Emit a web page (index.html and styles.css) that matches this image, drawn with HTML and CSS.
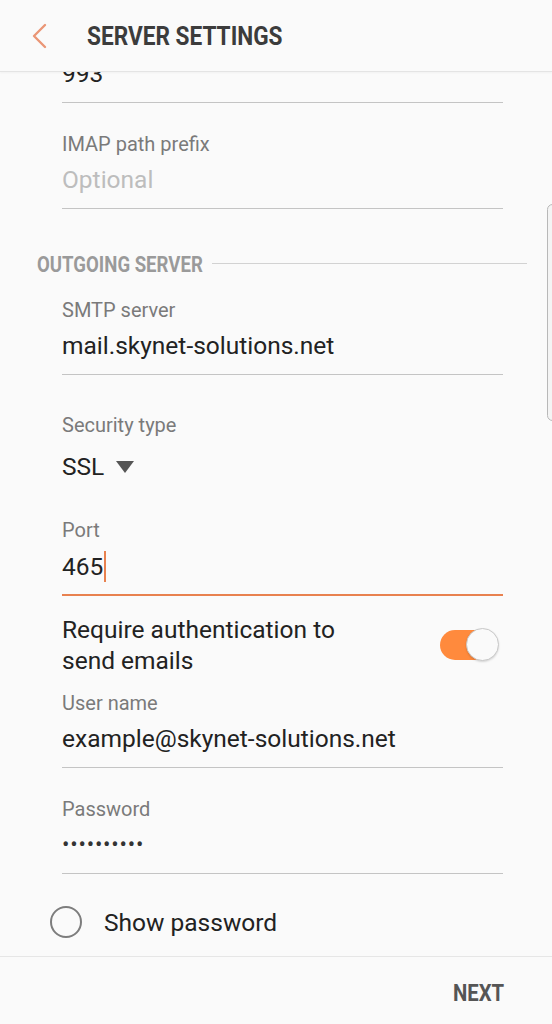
FILE: index.html
```html
<!DOCTYPE html>
<html lang="en">
<head>
  <meta charset="UTF-8">
  <meta name="viewport" content="width=device-width, initial-scale=1.0">
  <title>Server Settings</title>
  <link rel="stylesheet" href="styles.css">
</head>
<body>

<div class="screen">

  <!-- Toolbar -->
  <div class="toolbar">
    <a href="#" class="back" aria-label="Back">
      <svg width="24" height="28" viewBox="0 0 24 28">
        <polyline points="15,3 4,14 15,25" fill="none" stroke="#ea9676" stroke-width="2.4" stroke-linecap="round" stroke-linejoin="round"/>
      </svg>
    </a>
    <h1><span>SERVER SETTINGS</span></h1>
  </div>

  <!-- Settings list -->
  <div class="content">
    <div class="list">
      <div class="field">
        <div class="label">Port</div>
        <div class="value">993</div>
      </div>

      <div class="field">
        <div class="label">IMAP path prefix</div>
        <div class="value hint">Optional</div>
      </div>

      <div class="section-title">
        <span><span class="squeeze">OUTGOING SERVER</span></span>
        <div class="rule"></div>
      </div>

      <div class="field first">
        <div class="label">SMTP server</div>
        <div class="value">mail.skynet-solutions.net</div>
      </div>

      <div class="field spinner">
        <div class="label">Security type</div>
        <div class="value">SSL <span class="caret"></span></div>
      </div>

      <div class="field focused">
        <div class="label">Port</div>
        <div class="value">465<span class="cursor"></span></div>
      </div>

      <div class="switch-row">
        <div class="switch-text">Require authentication to<br>send emails</div>
        <div class="switch on"><div class="thumb"></div></div>
      </div>

      <div class="field tight">
        <div class="label">User name</div>
        <div class="value">example@skynet-solutions.net</div>
      </div>

      <div class="field">
        <div class="label">Password</div>
        <div class="value dots">••••••••••</div>
      </div>

      <div class="check-row">
        <div class="radio"></div>
        <span>Show password</span>
      </div>
    </div>

    <div class="scrollbar"></div>
  </div>

  <!-- Bottom bar -->
  <div class="bottom-bar">
    <a href="#" class="next"><span class="squeeze">NEXT</span></a>
  </div>

</div>

</body>
</html>
```

FILE: styles.css
```css
body {
  margin: 0;
  font-family: Roboto, "Liberation Sans", sans-serif;
  background-color: #fafafa;
  color: #222;
}

.screen {
  height: 1024px;
  display: flex;
  flex-direction: column;
  overflow: hidden;
}

.toolbar {
  height: 71px;
  flex: none;
  display: flex;
  align-items: center;
  border-bottom: 1px solid #e4e4e4;
  box-shadow: 0 1px 2px rgba(0, 0, 0, 0.04);
  background-color: #fafafa;
  position: relative;
  z-index: 2;
}

.toolbar .back {
  display: flex;
  margin-left: 30px;
  width: 57px;
}

.toolbar h1 {
  margin: 0;
  font-size: 26px;
  font-weight: bold;
  color: #3c3c3c;
  line-height: 30px;
}

.toolbar h1 span {
  display: inline-block;
  transform: scaleX(0.87);
  transform-origin: left center;
}

.content {
  flex: 1;
  position: relative;
  overflow: hidden;
}

.list {
  margin-top: -75px;
}

.field {
  margin: 0 49px 0 62px;
  padding: 29px 0 13px;
  border-bottom: 1px solid #c4c4c4;
}

.field.first {
  padding-top: 24px;
}

.field.tight {
  padding-top: 15px;
}

.field.spinner {
  padding: 38px 0 7px;
  border-bottom: none;
}

.field.spinner .value {
  margin-top: 15px;
  display: flex;
  align-items: center;
}

.field.focused {
  padding-bottom: 12px;
  border-bottom: 2px solid #e8814f;
}

.label {
  font-size: 20px;
  line-height: 24px;
  color: #7a7a7a;
}

.value {
  margin-top: 9px;
  font-size: 24.5px;
  line-height: 30px;
  color: #222;
  display: flex;
  align-items: center;
}

.value.hint {
  color: #bdbdbd;
}

.value.dots {
  font-size: 22px;
  letter-spacing: 0.8px;
  color: #333;
}

.caret {
  margin-left: 12px;
  width: 0;
  height: 0;
  border-left: 9px solid transparent;
  border-right: 9px solid transparent;
  border-top: 12px solid #555;
}

.cursor {
  display: inline-block;
  width: 2px;
  height: 31px;
  margin-left: 1px;
  background-color: #e8814f;
}

.section-title {
  display: flex;
  align-items: center;
  padding: 45px 25px 0 37px;
  height: 20px;
  font-size: 22px;
  font-weight: bold;
  color: #9a9a9a;
}

.section-title > span {
  width: 175px;
  flex: none;
}

.squeeze {
  display: inline-block;
  transform: scaleX(0.845);
  transform-origin: left center;
  white-space: nowrap;
}

.section-title .rule {
  flex: 1;
  height: 1px;
  margin-top: -1px;
  background-color: #d2d2d2;
}

.switch-row {
  display: flex;
  align-items: center;
  justify-content: space-between;
  margin: 0 62px 0 62px;
  padding-top: 18px;
}

.switch-text {
  font-size: 24.5px;
  line-height: 31px;
  color: #222;
}

.switch {
  position: relative;
  width: 50px;
  height: 30px;
  border-radius: 15px;
  background-color: #ff8a3d;
}

.switch .thumb {
  position: absolute;
  top: -2px;
  right: -9px;
  width: 31px;
  height: 31px;
  border-radius: 50%;
  background-color: #fafafa;
  border: 1px solid #c8c8c8;
  box-shadow: 0 1px 2px rgba(0, 0, 0, 0.15);
}

.check-row {
  display: flex;
  align-items: center;
  padding: 32px 0 0 50px;
  font-size: 24.5px;
  color: #222;
}

.radio {
  width: 28px;
  height: 28px;
  border: 2px solid #7d7d7d;
  border-radius: 50%;
  margin-right: 22px;
}

.scrollbar {
  position: absolute;
  top: 132px;
  right: -6px;
  width: 9px;
  height: 215px;
  border: 1px solid #b8b8b8;
  border-radius: 6px;
  background-color: #f4f4f4;
}

.bottom-bar {
  height: 68px;
  flex: none;
  display: flex;
  align-items: center;
  justify-content: flex-end;
  border-top: 1px solid #e6e6e6;
  padding: 5px 10px 0 0;
  box-sizing: border-box;
}

.bottom-bar .next {
  width: 89px;
  font-size: 24px;
  font-weight: bold;
  color: #555;
  text-decoration: none;
}
```
